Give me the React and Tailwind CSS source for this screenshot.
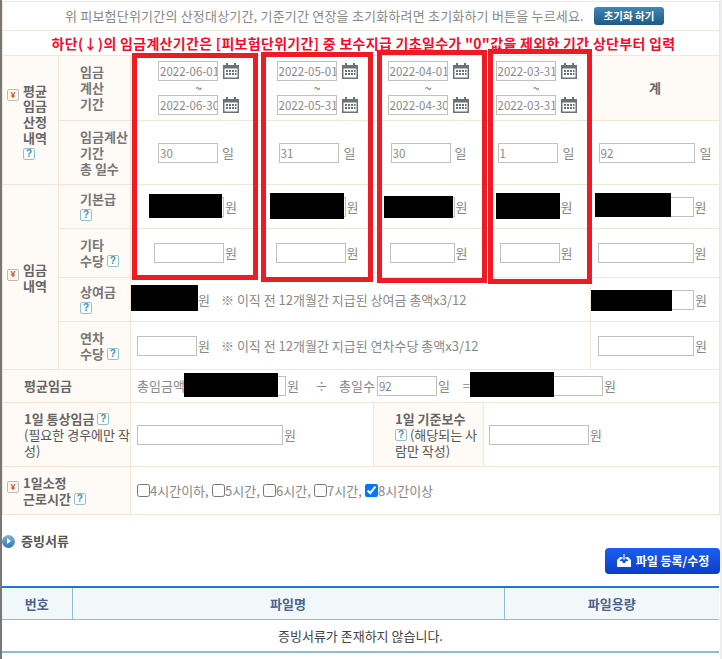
import React from 'react';

const Calendar = () => (
  <svg width="16" height="16" viewBox="0 0 16 16" className="shrink-0">
    <path d="M0 2h3V0h2v2h6V0h2v2h3v14H0z" fill="#6b7276" />
    <path d="M1.5 5.5h13V14.500h-13z" fill="#fff" />
    <path d="M3 7h2v2H3zM6 7h2v2H6zM9 7h2v2H9zM12 7h1.500v2H12zM3 10h2v2H3zM6 10h2v2H6zM9 10h2v2H9zM12 10h1.500v2H12z" fill="#6b7276" />
  </svg>
);

const Won = () => (
  <span className="inline-flex w-[12px] h-[12px] shrink-0 items-center justify-center rounded-[2px] border border-[#bbb] bg-[#fdf8f2] text-[9px] leading-none font-bold text-[#c8591c] font-['Liberation_Sans',sans-serif]">¥</span>
);

const Help = () => (
  <span className="mt-[2px] inline-flex h-[12px] w-[12px] shrink-0 items-center justify-center rounded-[2px] border border-[#8fc3d2] bg-white align-top text-[10px] leading-none font-bold text-[#3d8fa8] font-['Liberation_Sans',sans-serif]">?</span>
);

const Box = ({ value = '', className = 'w-[60px]' }) => (
  <input
    readOnly
    value={value}
    className={`h-[20px] shrink-0 border border-[#c0c0c0] bg-white pl-[1px] text-[11.5px] text-[#888] outline-none ${className}`}
  />
);

const DateCell = ({ from, to, pad }) => (
  <td className={pad}>
    <div className="flex w-[81px] flex-col items-center">
      <div className="flex items-center gap-[5px]"><Box value={from} /><Calendar /></div>
      <div className="h-[14px] text-[12px] leading-[14px] text-[#555]">~</div>
      <div className="flex items-center gap-[5px]"><Box value={to} /><Calendar /></div>
    </div>
  </td>
);

const Unit = ({ value, unit, pad, width = 'w-[60px]', gap = 'gap-[1px]' }) => (
  <td className={pad}>
    <div className={`flex items-center ${gap} text-[#888]`}><Box value={value} className={width} />{unit}</div>
  </td>
);

const Label = ({ children }) => (
  <th className="border border-[#f2e6d9] bg-[#fefaf6] pl-[21px] text-left font-bold leading-[16px] text-[#777]">{children}</th>
);

const Note = ({ children }) => (
  <span className="ml-[10px] text-[13px] text-[#888]">{children}</span>
);

const Check = ({ label, checked, className = '' }) => (
  <label className={`flex items-center ${className}`}>
    <input type="checkbox" readOnly checked={!!checked} className="m-0 h-[13px] w-[13px]" />
    <span>{label}</span>
  </label>
);

export default function App() {
  return (
    <div className="relative h-[659px] w-[722px] overflow-hidden border-x-2 border-l-[#777] border-r-[#eee] bg-white text-[13px] font-['Noto_Sans_CJK_KR','Liberation_Sans',sans-serif]">
      <div className="pt-[1px]">
        <table className="w-[717px] table-fixed border-collapse border border-[#f2e6d9]">
          <colgroup>
            <col className="w-[56px]" />
            <col className="w-[72px]" />
            <col className="w-[132px]" />
            <col className="w-[111px]" />
            <col className="w-[110px]" />
            <col className="w-[107px]" />
            <col className="w-[129px]" />
          </colgroup>
          <tbody>
            <tr className="h-[29px] border-b border-[#f2e6d9]">
              <td colSpan={7}>
                <div className="flex items-center pl-[62px] text-[#888]">
                  <span className="w-[529px] text-[13px] tracking-[0.2px]">위 피보험단위기간의 산정대상기간, 기준기간 연장을 초기화하려면 초기화하기 버튼을 누르세요.</span>
                  <button className="flex h-[18px] w-[70px] items-center justify-center rounded-[3px] bg-gradient-to-b from-[#3f87b4] to-[#1e5a85] text-[10.500px] font-bold text-white">초기화 하기</button>
                </div>
              </td>
            </tr>
            <tr className="h-[25px] border-b border-[#f2e6d9]">
              <td colSpan={7} className="pl-[5px] text-center text-[14px] font-bold tracking-[0.3px] text-[#fa0a28]">
                하단(↓)의 임금계산기간은 [피보험단위기간] 중 보수지급 기초일수가 "0"값을 제외한 기간 상단부터 입력
              </td>
            </tr>
            <tr className="h-[65px]">
              <th rowSpan={2} className="border border-[#f2e6d9] bg-[#fefaf6] pl-[4px] text-left font-bold leading-[15.700px] text-[#666]">
                <div className="flex items-start gap-[4px] pt-[4px]">
                  <span className="pt-[2px]"><Won /></span>
                  <span>평균<br />임금<br />산정<br />내역<br /><Help /></span>
                </div>
              </th>
              <Label>임금<br />계산<br />기간</Label>
              <DateCell from="2022-06-01" to="2022-06-30" pad="pl-[27px]" />
              <DateCell from="2022-05-01" to="2022-05-31" pad="pl-[14px]" />
              <DateCell from="2022-04-01" to="2022-04-30" pad="pl-[14px]" />
              <DateCell from="2022-03-31" to="2022-03-31" pad="pl-[12px]" />
              <th className="border border-[#f2e6d9] bg-[#fefaf6] font-bold text-[#666]">계</th>
            </tr>
            <tr className="h-[64px] border-t border-[#f2e6d9]">
              <th className="border border-[#f2e6d9] bg-[#fefaf6] pl-[21px] text-left font-bold leading-[16px] text-[#777] whitespace-nowrap">임금계산<br />기간<br />총 일수</th>
              <Unit value="30" unit="일" pad="pl-[27px]" gap="gap-[4px]" />
              <Unit value="31" unit="일" pad="pl-[16px]" gap="gap-[5px]" />
              <Unit value="30" unit="일" pad="pl-[17px]" gap="gap-[4px]" />
              <Unit value="1" unit="일" pad="pl-[14px]" gap="gap-[5px]" />
              <Unit value="92" unit="일" pad="pl-[8px]" width="w-[96px]" gap="gap-[5px]" />
            </tr>
            <tr className="h-[44px] border-t border-[#f2e6d9]">
              <th rowSpan={4} className="border border-[#f2e6d9] bg-[#fefaf6] pl-[4px] text-left font-bold leading-[15.700px] text-[#666]">
                <div className="flex items-start gap-[4px] pt-[2px]">
                  <span className="pt-[2px]"><Won /></span>
                  <span>임금<br />내역</span>
                </div>
              </th>
              <Label>기본급<br /><Help /></Label>
              <Unit unit="원" pad="pl-[23px]" width="w-[70px]" />
              <Unit unit="원" pad="pl-[13px]" width="w-[70px]" />
              <Unit unit="원" pad="pl-[16px]" width="w-[65px]" />
              <Unit unit="원" pad="pl-[16px]" />
              <Unit unit="원" pad="pl-[7px]" width="w-[96px]" />
            </tr>
            <tr className="h-[49px] border-t border-[#f2e6d9]">
              <Label>기타<br />수당 <Help /></Label>
              <Unit unit="원" pad="pl-[23px]" width="w-[70px]" />
              <Unit unit="원" pad="pl-[13px]" width="w-[70px]" />
              <Unit unit="원" pad="pl-[16px]" width="w-[65px]" />
              <Unit unit="원" pad="pl-[16px]" />
              <Unit unit="원" pad="pl-[7px]" width="w-[96px]" />
            </tr>
            <tr className="h-[44px] border-t border-[#f2e6d9]">
              <Label>상여금<br /><Help /></Label>
              <td colSpan={4} className="pl-[6px]">
                <div className="flex items-center gap-[1px] text-[#888]"><Box />원<Note>※ 이직 전 12개월간 지급된 상여금 총액x3/12</Note></div>
              </td>
              <td className="border-l border-[#f2e6d9] pl-[7px]">
                <div className="flex items-center gap-[1px] text-[#888]"><Box className="w-[96px]" />원</div>
              </td>
            </tr>
            <tr className="h-[48px] border-t border-[#f2e6d9]">
              <Label>연차<br />수당 <Help /></Label>
              <td colSpan={4} className="pl-[6px]">
                <div className="flex items-center gap-[1px] text-[#888]"><Box />원<Note>※ 이직 전 12개월간 지급된 연차수당 총액x3/12</Note></div>
              </td>
              <td className="border-l border-[#f2e6d9] pl-[7px]">
                <div className="flex items-center gap-[1px] text-[#888]"><Box className="w-[96px]" />원</div>
              </td>
            </tr>
            <tr className="h-[33px] border-t border-[#f2e6d9]">
              <th colSpan={2} className="border border-[#f2e6d9] bg-[#fefaf6] pl-[21px] text-left font-bold text-[#666]">평균임금</th>
              <td colSpan={5} className="pl-[6px]">
                <div className="flex items-center whitespace-nowrap text-[#888]">
                  <span className="w-[47px] shrink-0">총임금액</span>
                  <Box className="w-[102px]" />
                  <span className="ml-[1px]">원</span>
                  <span className="ml-[16px]">÷</span>
                  <span className="ml-[11px]">총일수</span>
                  <Box value="92" className="ml-[2px] w-[60px]" />
                  <span className="ml-[1px]">일</span>
                  <span className="ml-[13px]">=</span>
                  <Box className="w-[133px]" />
                  <span className="ml-[1px]">원</span>
                </div>
              </td>
            </tr>
            <tr className="h-[64px] border-t border-[#f2e6d9]">
              <th colSpan={2} className="border border-[#f2e6d9] bg-[#fefaf6] pl-[21px] text-left font-normal leading-[16px] text-[#555]">
                <span className="font-bold text-[#666]">1일 통상임금</span> <Help /><br />(필요한 경우에만 작성)
              </th>
              <td colSpan={2} className="pl-[6px]">
                <div className="flex items-center gap-[1px] text-[#888]"><Box className="w-[146px]" />원</div>
              </td>
              <th className="border border-[#f2e6d9] bg-[#fefaf6] pl-[21px] pr-[2px] text-left font-normal leading-[16px] text-[#555]">
                <span className="font-bold text-[#666]">1일 기준보수</span><br /><Help /> (해당되는 사람만 작성)
              </th>
              <td colSpan={2} className="pl-[5px]">
                <div className="flex items-center gap-[1px] text-[#888]"><Box className="w-[100px]" />원</div>
              </td>
            </tr>
            <tr className="h-[48px] border-y border-[#f2e6d9]">
              <th colSpan={2} className="border border-[#f2e6d9] bg-[#fefaf6] pl-[4px] text-left font-bold leading-[16px] text-[#666]">
                <div className="flex items-start gap-[4px]">
                  <span className="pt-[2px]"><Won /></span>
                  <span>1일소정<br />근로시간 <Help /></span>
                </div>
              </th>
              <td colSpan={5} className="pl-[6px]">
                <div className="flex items-center text-[#888]">
                  <Check label="4시간이하," className="w-[75px]" />
                  <Check label="5시간," className="w-[51px]" />
                  <Check label="6시간," className="w-[51px]" />
                  <Check label="7시간," className="w-[51px]" />
                  <Check label="8시간이상" checked />
                </div>
              </td>
            </tr>
          </tbody>
        </table>

        <div className="mt-[18px] flex items-center gap-[6px] text-[13px] font-bold leading-[16px] text-[#555]">
          <span className="flex h-[13px] w-[13px] items-center justify-center rounded-full bg-gradient-to-b from-[#7db4da] to-[#2f77ad]">
            <span className="h-0 w-0 border-y-[3px] border-l-[4px] border-y-transparent border-l-white" />
          </span>
          증빙서류
        </div>
        <div className="mt-[-1px] flex justify-end">
          <button className="flex h-[26px] w-[115px] items-center justify-center gap-[4px] rounded-[4px] bg-gradient-to-b from-[#1a5ff0] to-[#0b3fc4] text-[12px] font-bold text-white">
            <svg width="16" height="14" viewBox="0 0 16 14">
              <path d="M1 6l3-3h2v2H5L3.500 7H6l1 2h2l1-2h2.500L11 5h-1V3h2l3 3v7H1z" fill="#fff" />
              <path d="M7 0h2v3h2L8 6.500 5 3h2z" fill="#9db4e8" />
            </svg>
            파일 등록/수정
          </button>
        </div>

        <table className="mt-[12px] w-[717px] table-fixed border-collapse">
          <colgroup>
            <col className="w-[70px]" />
            <col className="w-[432px]" />
            <col />
          </colgroup>
          <thead>
            <tr className="h-[32px] border-t-2 border-b border-t-[#1c7ac8] border-b-[#8fbcd0] bg-[#f2f7fa] text-[13px] font-bold text-[#4a6490]">
              <th className="border-r border-[#8fbcd0]">번호</th>
              <th className="border-r border-[#8fbcd0]">파일명</th>
              <th>파일용량</th>
            </tr>
          </thead>
          <tbody>
            <tr className="h-[33px] border-b-2 border-[#8fbcd0]">
              <td colSpan={3} className="text-center text-[13px] text-[#444]">증빙서류가 존재하지 않습니다.</td>
            </tr>
          </tbody>
        </table>
      </div>

      {/* red marker boxes drawn over the form */}
      <div className="absolute left-[130px] top-[53px] h-[227px] w-[126px] border-[5px] border-[#ed1c24]" />
      <div className="absolute left-[259px] top-[52px] h-[230px] w-[112px] border-[5px] border-[#ed1c24]" />
      <div className="absolute left-[375px] top-[50px] h-[233px] w-[110px] border-[5px] border-[#ed1c24]" />
      <div className="absolute left-[486px] top-[49px] h-[235px] w-[104px] border-[5px] border-[#ed1c24]" />

      {/* blacked out amounts */}
      <div className="absolute left-[147px] top-[194px] h-[24px] w-[73px] bg-black" />
      <div className="absolute left-[268px] top-[193px] h-[26px] w-[74px] bg-black" />
      <div className="absolute left-[382px] top-[196px] h-[22px] w-[69px] bg-black" />
      <div className="absolute left-[494px] top-[193px] h-[26px] w-[64px] bg-black" />
      <div className="absolute left-[593px] top-[193px] h-[24px] w-[76px] bg-black" />
      <div className="absolute left-[129px] top-[285px] h-[26px] w-[67px] bg-black" />
      <div className="absolute left-[589px] top-[290px] h-[21px] w-[81px] bg-black" />
      <div className="absolute left-[182px] top-[373px] h-[24px] w-[94px] bg-black" />
      <div className="absolute left-[468px] top-[372px] h-[25px] w-[84px] bg-black" />
    </div>
  );
}
